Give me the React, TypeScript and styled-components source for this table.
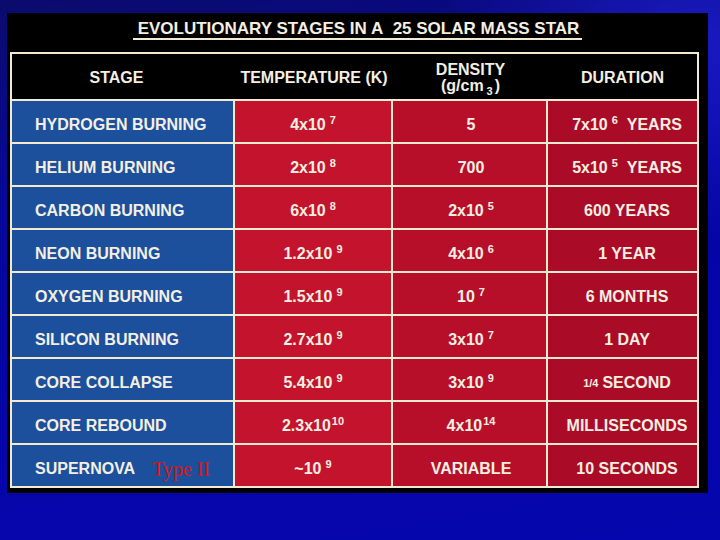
import React from 'react';
import styled, { createGlobalStyle } from 'styled-components';

const Global = createGlobalStyle`
  html, body { margin: 0; padding: 0; }
  body {
    width: 720px;
    height: 540px;
    overflow: hidden;
    font-family: "Liberation Sans", Arial, sans-serif;
  }
`;

const CREAM = '#f3ead2';
const TEXT = '#f4efe2';

const Page = styled.div`
  width: 720px;
  height: 540px;
  box-sizing: border-box;
  padding: 13px 12px 47px 7px;
  background:
    radial-gradient(ellipse 260px 200px at 700px 40px, rgba(40, 40, 230, 0.55), rgba(40, 40, 230, 0) 100%),
    linear-gradient(170deg, #0b0b6c 0%, #07079a 30%, #0505a8 60%, #0606ae 100%);
`;

const Panel = styled.div`
  width: 701px;
  height: 480px;
  box-sizing: border-box;
  background: #000;
  padding: 0 9px 0 3px;
  display: flex;
  flex-direction: column;
`;

const TitleBar = styled.div`
  height: 39px;
  box-sizing: border-box;
  padding: 8px 0 0 6px;
  display: flex;
  justify-content: center;
  align-items: flex-start;
`;

const Title = styled.h1`
  margin: 0;
  font-size: 17px;
  line-height: 16px;
  font-weight: 700;
  color: ${TEXT};
  padding: 0 3px 1px 5px;
  border-bottom: 2px solid ${CREAM};
  white-space: nowrap;
`;

const Table = styled.div`
  border: 2px solid ${CREAM};
  display: flex;
  flex-direction: column;
  background: ${CREAM};
  width: 689px;
  box-sizing: border-box;
`;

const HeaderRow = styled.div`
  display: grid;
  grid-template-columns: 223px 158px 155px 149px;
  height: 45px;
  background: #000;
`;

const HeaderCell = styled.div<{ $shift?: number }>`
  display: flex;
  flex-direction: column;
  align-items: center;
  justify-content: center;
  color: ${TEXT};
  font-weight: 700;
  font-size: 16px;
  line-height: 16px;
  padding-right: ${p => (p.$shift ?? 0) * 2}px;
  padding-top: 2px;
  white-space: nowrap;
`;

const Body = styled.div`
  display: grid;
  grid-template-columns: 221px 156px 153px 149px;
  grid-auto-rows: 41px;
  gap: 2px;
  padding-top: 2px;
`;

const Cell = styled.div<{ $col: number }>`
  display: flex;
  align-items: center;
  justify-content: ${p => (p.$col === 0 ? 'flex-start' : 'center')};
  padding-left: ${p => (p.$col === 0 ? 23 : p.$col === 3 ? 9 : p.$col === 2 ? 3 : 0)}px;
  padding-top: 6px;
  box-sizing: border-box;
  background: ${p =>
    p.$col === 0 ? '#1c4f9c' : p.$col === 1 ? '#c4142d' : p.$col === 2 ? '#b70f2a' : '#aa0c27'};
  color: ${TEXT};
  font-weight: 700;
  font-size: 16px;
  line-height: 18px;
  white-space: nowrap;
`;

const Sup = styled.sup<{ $gap?: boolean }>`
  font-size: 11px;
  line-height: 0;
  vertical-align: 6px;
  margin-left: ${p => (p.$gap ? 4 : 1)}px;
`;

const Sub = styled.sub`
  font-size: 11px;
  line-height: 0;
  vertical-align: -4px;
  margin: 0 2px 0 3px;
`;

const Small = styled.span`
  font-size: 11px;
  margin-right: 4px;
`;

const TypeNote = styled.span`
  font-family: "Liberation Serif", "Times New Roman", serif;
  font-weight: 400;
  font-size: 20px;
  color: #d81818;
  margin-left: 17px;
`;

const Pow = ({ base, exp, gap = true }: { base: string; exp: string; gap?: boolean }) => (
  <span>
    {base}
    <Sup $gap={gap}>{exp}</Sup>
  </span>
);

const rows: React.ReactNode[][] = [
  ['HYDROGEN BURNING', <Pow base="4x10" exp="7" />, '5', <><Pow base="7x10" exp="6" />&nbsp;&nbsp;YEARS</>],
  ['HELIUM BURNING', <Pow base="2x10" exp="8" />, '700', <><Pow base="5x10" exp="5" />&nbsp;&nbsp;YEARS</>],
  ['CARBON BURNING', <Pow base="6x10" exp="8" />, <Pow base="2x10" exp="5" />, '600 YEARS'],
  ['NEON BURNING', <Pow base="1.2x10" exp="9" />, <Pow base="4x10" exp="6" />, '1 YEAR'],
  ['OXYGEN BURNING', <Pow base="1.5x10" exp="9" />, <Pow base="10" exp="7" />, '6 MONTHS'],
  ['SILICON BURNING', <Pow base="2.7x10" exp="9" />, <Pow base="3x10" exp="7" />, '1 DAY'],
  ['CORE COLLAPSE', <Pow base="5.4x10" exp="9" />, <Pow base="3x10" exp="9" />, <><Small>1/4</Small>SECOND</>],
  ['CORE  REBOUND', <Pow base="2.3x10" exp="10" gap={false} />, <Pow base="4x10" exp="14" gap={false} />, 'MILLISECONDS'],
  [<>SUPERNOVA<TypeNote>Type II</TypeNote></>, <Pow base="~10" exp="9" />, 'VARIABLE', '10 SECONDS'],
];

export default function App() {
  return (
    <>
      <Global />
      <Page>
        <Panel>
          <TitleBar>
            <Title>EVOLUTIONARY STAGES IN A&nbsp; 25 SOLAR MASS STAR</Title>
          </TitleBar>
          <Table>
            <HeaderRow>
              <HeaderCell $shift={7}>STAGE</HeaderCell>
              <HeaderCell>TEMPERATURE (K)</HeaderCell>
              <HeaderCell>
                <span>DENSITY</span>
                <span>
                  (g/cm<Sub>3</Sub>)
                </span>
              </HeaderCell>
              <HeaderCell>DURATION</HeaderCell>
            </HeaderRow>
            <Body>
              {rows.map((r, i) =>
                r.map((c, j) => (
                  <Cell key={`${i}-${j}`} $col={j}>
                    {c}
                  </Cell>
                ))
              )}
            </Body>
          </Table>
        </Panel>
      </Page>
    </>
  );
}
